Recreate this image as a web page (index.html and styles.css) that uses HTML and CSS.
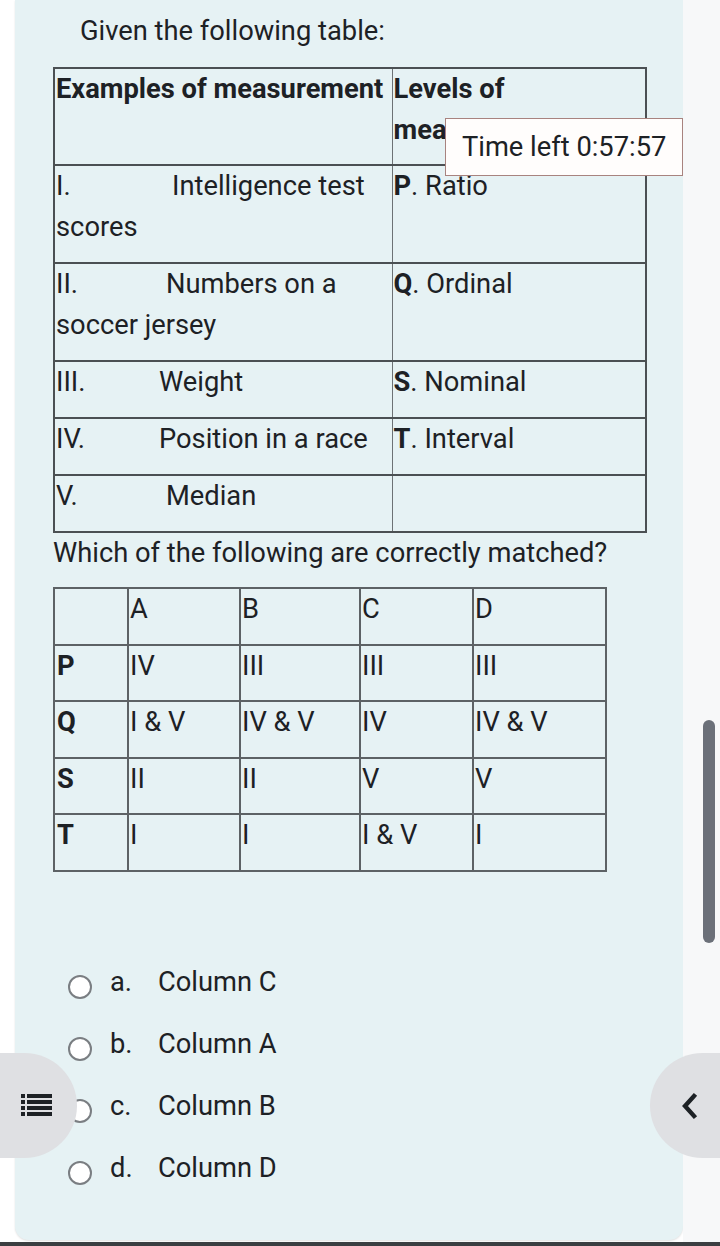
FILE: index.html
```html
<!DOCTYPE html>
<html lang="en">
<head>
<meta charset="utf-8">
<title>Quiz question</title>
<link rel="stylesheet" href="styles.css">
</head>
<body>
<div class="screen">
  <div class="gutter"></div>
  <main class="panel">
    <p class="intro">Given the following table:</p>
    <table class="match">
      <colgroup><col class="c1"><col class="c2"></colgroup>
      <tr class="head">
        <td><b>Examples of measurement</b></td>
        <td><b>Levels of measurement</b></td>
      </tr>
      <tr>
        <td><span class="num n1">I.</span>Intelligence test scores</td>
        <td><b>P</b>. Ratio</td>
      </tr>
      <tr>
        <td><span class="num n2">II.</span>Numbers on a soccer jersey</td>
        <td><b>Q</b>. Ordinal</td>
      </tr>
      <tr>
        <td><span class="num n3">III.</span>Weight</td>
        <td><b>S</b>. Nominal</td>
      </tr>
      <tr>
        <td><span class="num n3">IV.</span>Position in a race</td>
        <td><b>T</b>. Interval</td>
      </tr>
      <tr>
        <td><span class="num n2">V.</span>Median</td>
        <td></td>
      </tr>
    </table>
    <p class="prompt">Which of the following are correctly matched?</p>
    <table class="grid">
      <colgroup><col class="g0"><col class="g1"><col class="g2"><col class="g3"><col class="g4"></colgroup>
      <tr><td></td><td>A</td><td>B</td><td>C</td><td>D</td></tr>
      <tr><td><b>P</b></td><td>IV</td><td>III</td><td>III</td><td>III</td></tr>
      <tr><td><b>Q</b></td><td>I &amp; V</td><td>IV &amp; V</td><td>IV</td><td>IV &amp; V</td></tr>
      <tr><td><b>S</b></td><td>II</td><td>II</td><td>V</td><td>V</td></tr>
      <tr><td><b>T</b></td><td>I</td><td>I</td><td>I &amp; V</td><td>I</td></tr>
    </table>
    <div class="answers">
      <label class="opt"><span class="radio"></span><span class="letter">a.</span><span>Column C</span></label>
      <label class="opt"><span class="radio"></span><span class="letter">b.</span><span>Column A</span></label>
      <label class="opt"><span class="radio"></span><span class="letter">c.</span><span>Column B</span></label>
      <label class="opt"><span class="radio"></span><span class="letter">d.</span><span>Column D</span></label>
    </div>
  </main>
  <div class="rail"></div>
</div>

<div class="timer">Time left 0:57:57</div>
<div class="scrollbar"></div>
<button class="fab fab-left" aria-label="Quiz navigation">
  <svg width="31" height="22" viewBox="0 0 31 22">
    <g fill="#1d2125">
      <rect x="0" y="0" width="4" height="4"/><rect x="6" y="0" width="25" height="4"/>
      <rect x="0" y="6" width="4" height="4"/><rect x="6" y="6" width="25" height="4"/>
      <rect x="0" y="12" width="4" height="4"/><rect x="6" y="12" width="25" height="4"/>
      <rect x="0" y="18" width="4" height="4"/><rect x="6" y="18" width="25" height="4"/>
    </g>
  </svg>
</button>
<button class="fab fab-right" aria-label="Open drawer">
  <svg width="18" height="28" viewBox="0 0 18 28">
    <path d="M13 4 L4 14 L13 24" fill="none" stroke="#1d2125" stroke-width="4.4" stroke-linecap="square" stroke-linejoin="miter"/>
  </svg>
</button>
<div class="navbar"></div>
</body>
</html>
```

FILE: styles.css
```css
html, body {
  margin: 0;
  padding: 0;
}
body {
  width: 720px;
  height: 1246px;
  overflow: hidden;
  background: #ffffff;
  font-family: Roboto, "Liberation Sans", Arial, sans-serif;
  font-size: 27.3px;
  line-height: 41px;
  color: #1d2125;
}
.screen {
  display: flex;
  height: 1246px;
}
.gutter {
  width: 15px;
  flex: none;
  background: #ffffff;
}
.rail {
  flex: 1;
  background: #f7f8f9;
}
.panel {
  width: 668px;
  flex: none;
  height: 1240px;
  box-sizing: border-box;
  background: #e6f2f4;
  border-radius: 0 0 14px 14px;
  padding: 11px 0 0 38px;
  box-shadow: 0 1px 2px rgba(0,0,0,0.12);
}
.intro {
  margin: 0 0 15px 27px;
}
.prompt {
  margin: 0 0 13px 0;
}
table {
  border-collapse: collapse;
  table-layout: fixed;
}
.match {
  width: 592px;
  border: 2px solid #4b5053;
}
.match .c1 { width: 338px; }
.match .c2 { width: 254px; }
.match td {
  vertical-align: top;
  padding: 0 1px 14px 1px;
  border-top: 2px solid #4b5053;
  border-bottom: 2px solid #4b5053;
  border-left: 1px solid #6d7275;
  border-right: 1px solid #6d7275;
}
.match .head td {
  padding-bottom: 13px;
}
.num {
  display: inline-block;
}
.n1 { width: 116px; }
.n2 { width: 110px; }
.n3 { width: 103px; }

.grid {
  width: 552px;
  border: 2px solid #5d6265;
}
.grid .g0 { width: 74px; }
.grid .g1 { width: 112px; }
.grid .g2 { width: 120px; }
.grid .g3 { width: 113px; }
.grid .g4 { width: 133px; }
.grid td {
  height: 56.6px;
  box-sizing: border-box;
  vertical-align: top;
  padding: 0 0 0 1px;
  border: 2px solid #5d6265;
}
.grid tr td:first-child {
  padding-left: 2px;
}

.answers {
  margin: 80px 0 0 15px;
  display: flex;
  flex-direction: column;
}
.opt {
  display: flex;
  align-items: center;
  height: 62px;
}
.radio {
  width: 20px;
  height: 20px;
  border: 2px solid #7a7e82;
  border-radius: 50%;
  background: #ffffff;
  margin-right: 18px;
  margin-top: 9px;
  flex: none;
}
.letter {
  width: 48px;
}

.timer {
  position: absolute;
  left: 445px;
  top: 118px;
  width: 238px;
  height: 58px;
  box-sizing: border-box;
  background: #fffdfc;
  border: 1px solid #a8837f;
  padding-left: 16px;
  line-height: 56px;
  white-space: nowrap;
}
.scrollbar {
  position: absolute;
  left: 703px;
  top: 720px;
  width: 12px;
  height: 223px;
  border-radius: 6px;
  background: #6b7079;
}
.fab {
  position: absolute;
  top: 1053px;
  height: 105px;
  border: none;
  padding: 0;
  margin: 0;
  background: #dfe0e3;
  display: flex;
  align-items: center;
}
.fab-left {
  left: 0;
  width: 77px;
  border-radius: 0 53px 53px 0;
  padding-left: 21px;
}
.fab-left svg { margin-top: -2px; }
.fab-right {
  left: 650px;
  width: 70px;
  border-radius: 53px 0 0 53px;
  padding-left: 31px;
}
.navbar {
  position: absolute;
  left: 0;
  top: 1242px;
  width: 720px;
  height: 4px;
  background: #3b3e41;
}
```
